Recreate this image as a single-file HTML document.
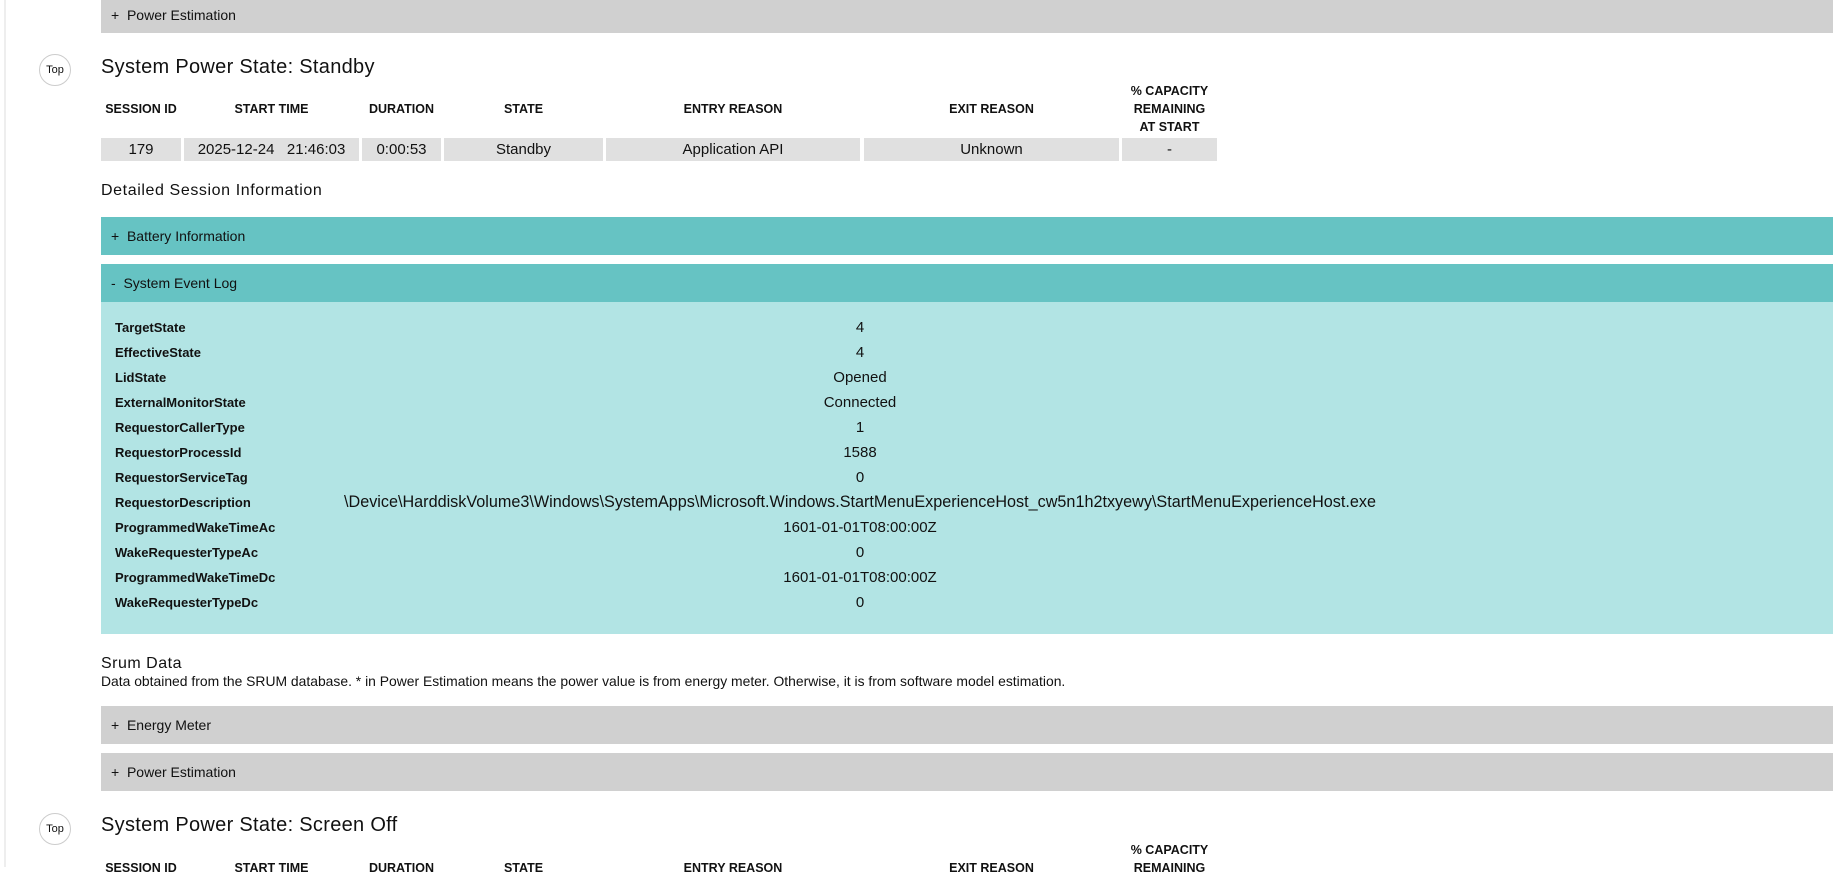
<!DOCTYPE html>
<html><head><meta charset="utf-8"><style>
*{margin:0;padding:0;box-sizing:border-box}
body{width:1833px;height:867px;overflow:hidden;background:#fff;font-family:"Liberation Sans",sans-serif;color:#111;position:relative}
.a{position:absolute;white-space:nowrap}
.bar{position:absolute;left:101px;width:1732px;height:38px;line-height:38px;font-size:14px;padding-left:10px}
.g{background:#d0d0d0}.t{background:#66c3c3}
.top{position:absolute;width:32px;height:32px;border:1px solid #ccc;border-radius:50%;font-size:11px;text-align:center;line-height:30px;left:39px}
.title{position:absolute;left:101px;font-size:20px;letter-spacing:.3px}
.th{position:absolute;font-size:12.5px;font-weight:bold;text-align:center;line-height:18px}
.td{position:absolute;top:138px;height:23px;line-height:23px;background:#e0e0e0;font-size:15px;text-align:center}
.lab{position:absolute;left:115px;font-size:13px;font-weight:bold;line-height:25px}
.val{position:absolute;left:200px;width:1320px;text-align:center;font-size:15px;line-height:25px;white-space:nowrap}
</style></head><body>
<div class="a" style="left:4px;top:0;width:2px;height:867px;background:#eee"></div>
<div class="bar g" style="top:0;height:33px;line-height:31px">+&nbsp; Power Estimation</div>
<div class="top" style="top:54px">Top</div>
<div class="title" style="top:56px">System Power State: Standby</div>
<div class="th" style="left:101px;width:80px;top:100px">SESSION ID</div>
<div class="th" style="left:184px;width:175px;top:100px">START TIME</div>
<div class="th" style="left:362px;width:79px;top:100px">DURATION</div>
<div class="th" style="left:444px;width:159px;top:100px">STATE</div>
<div class="th" style="left:606px;width:254px;top:100px">ENTRY REASON</div>
<div class="th" style="left:864px;width:255px;top:100px">EXIT REASON</div>
<div class="th" style="left:1122px;width:95px;top:82px">% CAPACITY<br>REMAINING<br>AT START</div>
<div class="td" style="left:101px;width:80px">179</div>
<div class="td" style="left:184px;width:175px">2025-12-24&nbsp;&nbsp; 21:46:03</div>
<div class="td" style="left:362px;width:79px">0:00:53</div>
<div class="td" style="left:444px;width:159px">Standby</div>
<div class="td" style="left:606px;width:254px">Application API</div>
<div class="td" style="left:864px;width:255px">Unknown</div>
<div class="td" style="left:1122px;width:95px">-</div>
<div class="a" style="left:101px;top:182px;font-size:16px;letter-spacing:.6px">Detailed Session Information</div>
<div class="bar t" style="top:217px">+&nbsp; Battery Information</div>
<div class="bar t" style="top:264px">-&nbsp; System Event Log</div>
<div class="a" style="left:101px;top:302px;width:1732px;height:332px;background:#b2e4e4"></div>
<div class="lab" style="top:315px">TargetState</div><div class="val" style="top:315px">4</div>
<div class="lab" style="top:340px">EffectiveState</div><div class="val" style="top:340px">4</div>
<div class="lab" style="top:365px">LidState</div><div class="val" style="top:365px">Opened</div>
<div class="lab" style="top:390px">ExternalMonitorState</div><div class="val" style="top:390px">Connected</div>
<div class="lab" style="top:415px">RequestorCallerType</div><div class="val" style="top:415px">1</div>
<div class="lab" style="top:440px">RequestorProcessId</div><div class="val" style="top:440px">1588</div>
<div class="lab" style="top:465px">RequestorServiceTag</div><div class="val" style="top:465px">0</div>
<div class="lab" style="top:490px">RequestorDescription</div><div class="val" style="top:490px;font-size:16.2px">\Device\HarddiskVolume3\Windows\SystemApps\Microsoft.Windows.StartMenuExperienceHost_cw5n1h2txyewy\StartMenuExperienceHost.exe</div>
<div class="lab" style="top:515px">ProgrammedWakeTimeAc</div><div class="val" style="top:515px">1601-01-01T08:00:00Z</div>
<div class="lab" style="top:540px">WakeRequesterTypeAc</div><div class="val" style="top:540px">0</div>
<div class="lab" style="top:565px">ProgrammedWakeTimeDc</div><div class="val" style="top:565px">1601-01-01T08:00:00Z</div>
<div class="lab" style="top:590px">WakeRequesterTypeDc</div><div class="val" style="top:590px">0</div>
<div class="a" style="left:101px;top:655px;font-size:16px;letter-spacing:.5px">Srum Data</div>
<div class="a" style="left:101px;top:673px;font-size:13.9px">Data obtained from the SRUM database. * in Power Estimation means the power value is from energy meter. Otherwise, it is from software model estimation.</div>
<div class="bar g" style="top:706px">+&nbsp; Energy Meter</div>
<div class="bar g" style="top:753px">+&nbsp; Power Estimation</div>
<div class="top" style="top:813px">Top</div>
<div class="title" style="top:814px">System Power State: Screen Off</div>
<div class="th" style="left:1122px;width:95px;top:841px">% CAPACITY<br>REMAINING</div>
<div class="th" style="left:101px;width:80px;top:859px">SESSION ID</div>
<div class="th" style="left:184px;width:175px;top:859px">START TIME</div>
<div class="th" style="left:362px;width:79px;top:859px">DURATION</div>
<div class="th" style="left:444px;width:159px;top:859px">STATE</div>
<div class="th" style="left:606px;width:254px;top:859px">ENTRY REASON</div>
<div class="th" style="left:864px;width:255px;top:859px">EXIT REASON</div>
</body></html>
